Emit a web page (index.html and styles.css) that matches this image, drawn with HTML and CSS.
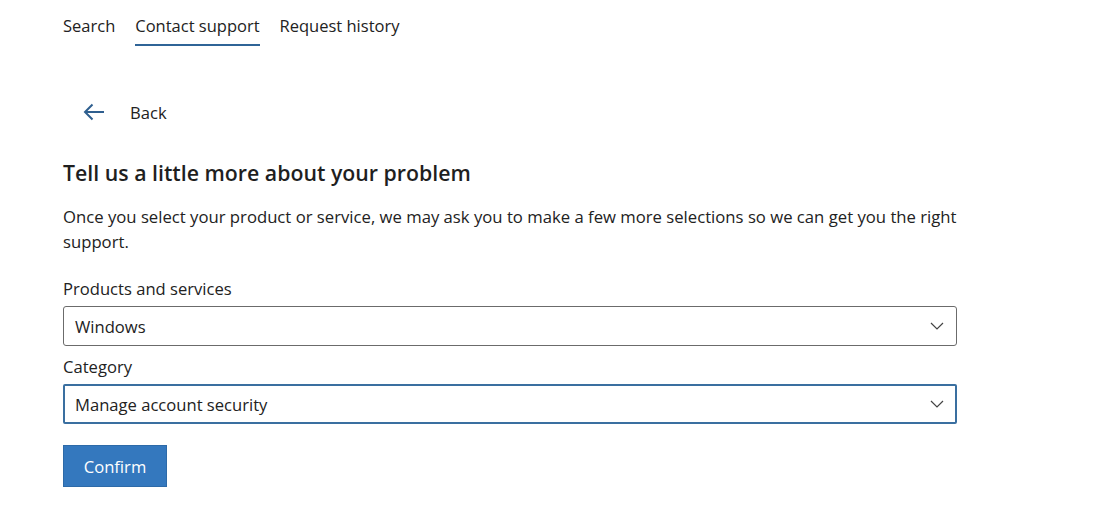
FILE: index.html
```html
<!DOCTYPE html>
<html>
<head>
    <title>Contact support</title>
    <link rel="stylesheet" href="styles.css">
</head>
<body>
    <div id="app">
        <nav class="tabs">
            <a class="tab">Search</a>
            <a class="tab active">Contact support</a>
            <a class="tab">Request history</a>
        </nav>
        <div class="back-row">
            <span class="back-icon">
                <svg width="22" height="18" viewBox="0 0 22 18"><path d="M21 9H2M9.5 1.5L2 9l7.5 7.5" fill="none" stroke="#2f5f8f" stroke-width="2"/></svg>
            </span>
            <span class="back-link">Back</span>
        </div>
        <h1>Tell us a little more about your problem</h1>
        <p class="intro">Once you select your product or service, we may ask you to make a few more selections so we can get you the right support.</p>
        <div class="form-group first">
            <label>Products and services</label>
            <div class="select-box">
                <span>Windows</span>
                <svg class="chevron" width="14" height="8" viewBox="0 0 14 8"><path d="M1 1l6 6 6-6" fill="none" stroke="#444" stroke-width="1.2"/></svg>
            </div>
        </div>
        <div class="form-group">
            <label>Category</label>
            <div class="select-box focused">
                <span>Manage account security</span>
                <svg class="chevron" width="14" height="8" viewBox="0 0 14 8"><path d="M1 1l6 6 6-6" fill="none" stroke="#444" stroke-width="1.2"/></svg>
            </div>
        </div>
        <button class="confirm">Confirm</button>
    </div>
</body>
</html>
```

FILE: styles.css
```css
body { margin: 0; font-family: "Open Sans", sans-serif; color: #222; background: #fff; }
#app { width: 894px; padding-left: 63px; }
.tabs { display: flex; gap: 20px; padding-top: 14px; font-size: 16.5px; line-height: 24px; }
.tab { padding-bottom: 6px; border-bottom: 2px solid transparent; cursor: pointer; }
.tab.active { border-bottom-color: #2f6497; }
.back-row { display: flex; align-items: center; margin-top: 52px; height: 28px; font-size: 16.6px; }
.back-icon { display: flex; margin-left: 20px; margin-right: 25px; }
h1 { font-size: 21.3px; font-weight: 600; margin: 32px 0 0; line-height: 30px; color: #1f1f1f; }
.intro { font-size: 16.7px; line-height: 25px; margin: 16px 0 0; }
.form-group { margin-top: 9px; }
.form-group.first { margin-top: 23px; }
label { display: block; font-size: 16.6px; line-height: 24px; margin-bottom: 5px; }
.select-box {
    display: flex;
    justify-content: space-between;
    align-items: center;
    height: 40px;
    box-sizing: border-box;
    border: 1px solid #6b6b6b;
    border-radius: 3px;
    padding: 0 12px 0 11px;
    font-size: 16.6px;
}
.select-box.focused { border: 2px solid #3a6fa0; border-radius: 2px; padding: 0 11px 0 10px; }
.confirm {
    display: block;
    margin-top: 21px;
    width: 104px;
    height: 42px;
    background: #3478be;
    color: #fff;
    border: 1px solid #2d6aa8;
    font-family: inherit;
    font-size: 16.6px;
    cursor: pointer;
}
```
